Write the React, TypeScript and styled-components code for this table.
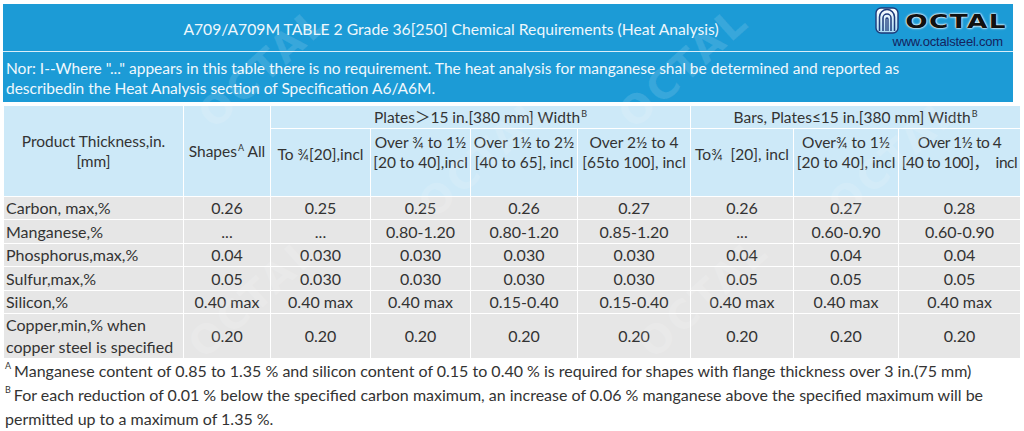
import styled, { createGlobalStyle } from 'styled-components';

const GlobalStyle = createGlobalStyle`
  html, body {
    margin: 0;
    padding: 0;
    background: #fff;
  }
  body {
    font-family: Lato, "Noto Sans CJK SC", sans-serif;
  }
`;

// column widths of the table, in px
const cols = [180, 87, 100, 100, 107, 113, 103, 105, 122];

const plateCols = [
  ['To ¾[20],incl'],
  ['Over ¾ to 1½', '[20 to 40],incl'],
  ['Over 1½ to 2½', '[40 to 65], incl'],
  ['Over 2½ to 4', '[65to 100], incl'],
];

const barCols = [
  ['To¾  [20], incl'],
  ['Over¾ to 1½', '[20 to 40], incl'],
  ['Over 1½ to 4', '[40 to 100]，  incl'],
];

const rows = [
  { label: ['Carbon, max,%'], h: 23, values: ['0.26', '0.25', '0.25', '0.26', '0.27', '0.26', '0.27', '0.28'] },
  { label: ['Manganese,%'], h: 24, values: ['...', '...', '0.80-1.20', '0.80-1.20', '0.85-1.20', '...', '0.60-0.90', '0.60-0.90'] },
  { label: ['Phosphorus,max,%'], h: 23, values: ['0.04', '0.030', '0.030', '0.030', '0.030', '0.04', '0.04', '0.04'] },
  { label: ['Sulfur,max,%'], h: 24, values: ['0.05', '0.030', '0.030', '0.030', '0.030', '0.05', '0.05', '0.05'] },
  { label: ['Silicon,%'], h: 23, values: ['0.40 max', '0.40 max', '0.40 max', '0.15-0.40', '0.15-0.40', '0.40 max', '0.40 max', '0.40 max'] },
  { label: ['Copper,min,% when', 'copper steel is specified'], h: 45, values: ['0.20', '0.20', '0.20', '0.20', '0.20', '0.20', '0.20', '0.20'] },
];

// faint diagonal watermarks, placed over the page
const marks = [
  { x: 185, y: 46 },
  { x: 605, y: 46 },
  { x: 405, y: 136 },
  { x: 815, y: 136 },
  { x: 175, y: 276 },
  { x: 625, y: 276 },
];

const Page = styled.div`
  position: relative;
  width: 1024px;
  height: 431px;
  overflow: hidden;
  box-sizing: border-box;
  padding: 4px 0 0 3px;
`;

const TitleBar = styled.div`
  width: 1010px;
  height: 47px;
  background: #1c9bd6;
  border-bottom: 1px solid #d9eef9;
  display: flex;
  align-items: center;
`;

const Title = styled.div`
  flex: 1;
  text-align: center;
  padding-left: 36px;
  padding-top: 2px;
  color: #eef7fc;
  font-size: 15.7px;
`;

const Logo = styled.div`
  width: 150px;
  box-sizing: border-box;
  display: flex;
  flex-direction: column;
  align-items: flex-end;
  padding-right: 6px;
`;

const LogoTop = styled.div`
  display: flex;
  align-items: center;
  gap: 6px;
`;

const LogoWord = styled.span`
  display: inline-block;
  margin-left: 25px;
  font-family: "DejaVu Sans", sans-serif;
  font-weight: bold;
  font-size: 20px;
  letter-spacing: 1px;
  line-height: 20px;
  color: #111;
  transform: scaleX(1.32);
  transform-origin: right center;
  text-shadow: 0 0 1px #fff, 0 0 2px #fff, 0 0 2px #fff;
`;

const LogoUrl = styled.span`
  font-family: "Liberation Sans", Arial, sans-serif;
  font-size: 13px;
  line-height: 13px;
  letter-spacing: -0.2px;
  color: #14235e;
  margin: 1px 4px 0 0;
`;

const Note = styled.div`
  width: 1010px;
  height: 50px;
  box-sizing: border-box;
  background: #1c9bd6;
  color: #f0f8fd;
  font-size: 15.5px;
  line-height: 20px;
  padding: 6px 0 0 3px;
`;

const Table = styled.table`
  margin-top: 3px;
  width: 1017px;
  table-layout: fixed;
  border-collapse: collapse;
  color: #333;
`;

const HeadCell = styled.th<{ $pb?: number; $tight?: boolean }>`
  background: #cde9f8;
  border: 1px solid #fff;
  font-weight: normal;
  font-size: 15.5px;
  line-height: 20px;
  letter-spacing: ${(p) => (p.$tight ? '-0.45px' : 'normal')};
  text-align: center;
  vertical-align: middle;
  padding: 0 0 ${(p) => p.$pb ?? 0}px;
  white-space: pre;
  overflow: hidden;
`;

const Cell = styled.td<{ $label?: boolean }>`
  background: #e6e6e6;
  border: 1px solid #fff;
  font-size: 16px;
  line-height: 22px;
  padding: 0 0 0 ${(p) => (p.$label ? 2 : 0)}px;
  text-align: ${(p) => (p.$label ? 'left' : 'center')};
  vertical-align: middle;
  white-space: nowrap;
`;

const Sup = styled.sup`
  font-size: 9px;
  vertical-align: top;
  position: relative;
  top: -3px;
  margin-left: 1px;
`;

const Notes = styled.div`
  padding: 0 0 0 2px;
  color: #333;
  font-size: 16px;
  line-height: 24px;
`;

const NoteSup = styled.sup`
  font-size: 9px;
  vertical-align: top;
  position: relative;
  top: -5px;
  margin-right: 3px;
`;

const Mark = styled.div`
  position: absolute;
  width: 150px;
  text-align: center;
  font-family: "DejaVu Sans", sans-serif;
  font-weight: bold;
  font-size: 40px;
  line-height: 48px;
  letter-spacing: 3px;
  color: rgba(255, 255, 255, 0.12);
  transform: rotate(-42deg);
  pointer-events: none;
  white-space: nowrap;
`;

const LogoIcon = () => (
  <svg width="24" height="27" viewBox="0 0 24 27">
    <defs>
      <linearGradient id="lg" x1="0" y1="0" x2="0" y2="1">
        <stop offset="0" stopColor="#ffffff" />
        <stop offset="1" stopColor="#a9dcf5" />
      </linearGradient>
    </defs>
    <rect x="1" y="1" width="22" height="25" rx="5" fill="url(#lg)" stroke="#1d3a7a" strokeWidth="1.4" />
    <path d="M4.5 24 V10 a7.5 7.5 0 0 1 15 0 V24" fill="none" stroke="#1d3a7a" strokeWidth="1.5" />
    <path d="M8 24 V11 a4 4 0 0 1 8 0 V24" fill="none" stroke="#1d3a7a" strokeWidth="1.5" />
    <path d="M11 24 V12 a1 1 0 0 1 2 0 V24" fill="none" stroke="#1d3a7a" strokeWidth="1.3" />
  </svg>
);

const Lines = ({ lines }: { lines: string[] }) => (
  <>
    {lines.map((l, i) => (
      <div key={i}>{l}</div>
    ))}
  </>
);

const App = () => {
  const subCols = [...plateCols, ...barCols];
  return (
    <Page>
      <GlobalStyle />
      <TitleBar>
        <Title>A709/A709M TABLE 2 Grade 36[250] Chemical Requirements (Heat Analysis)</Title>
        <Logo>
          <LogoTop>
            <LogoIcon />
            <LogoWord>OCTAL</LogoWord>
          </LogoTop>
          <LogoUrl>www.octalsteel.com</LogoUrl>
        </Logo>
      </TitleBar>
      <Note>
        Nor: I--Where "..." appears in this table there is no requirement. The heat analysis for manganese shal be determined and reported as
        <br />
        describedin the Heat Analysis section of Specification A6/A6M.
      </Note>
      <Table>
        <colgroup>
          {cols.map((w, i) => (
            <col key={i} style={{ width: w }} />
          ))}
        </colgroup>
        <thead>
          <tr style={{ height: 23 }}>
            <HeadCell rowSpan={2}>
              Product Thickness,in.
              <br />
              [mm]
            </HeadCell>
            <HeadCell rowSpan={2}>
              Shapes<Sup>A</Sup> All
            </HeadCell>
            <HeadCell colSpan={4}>
              Plates＞15 in.[380 mm] Width<Sup>B</Sup>
            </HeadCell>
            <HeadCell colSpan={3}>
              Bars, Plates≤15 in.[380 mm] Width<Sup>B</Sup>
            </HeadCell>
          </tr>
          <tr style={{ height: 68 }}>
            {subCols.map((c, i) => (
              <HeadCell key={i} $pb={c.length === 1 ? 18 : 21} $tight={i === subCols.length - 1}>
                <Lines lines={c} />
              </HeadCell>
            ))}
          </tr>
        </thead>
        <tbody>
          {rows.map((r, i) => (
            <tr key={i} style={{ height: r.h }}>
              <Cell $label>
                <Lines lines={r.label} />
              </Cell>
              {r.values.map((v, j) => (
                <Cell key={j}>{v}</Cell>
              ))}
            </tr>
          ))}
        </tbody>
      </Table>
      <Notes>
        <div>
          <NoteSup>A</NoteSup>Manganese content of 0.85 to 1.35 % and silicon content of 0.15 to 0.40 % is required for shapes with flange thickness over 3 in.(75 mm)
        </div>
        <div>
          <NoteSup>B</NoteSup>For each reduction of 0.01 % below the specified carbon maximum, an increase of 0.06 % manganese above the specified maximum will be
        </div>
        <div>permitted up to a maximum of 1.35 %.</div>
      </Notes>
      {marks.map((m, i) => (
        <Mark key={i} style={{ left: m.x, top: m.y }}>
          OCTAL
        </Mark>
      ))}
    </Page>
  );
};

export default App;
